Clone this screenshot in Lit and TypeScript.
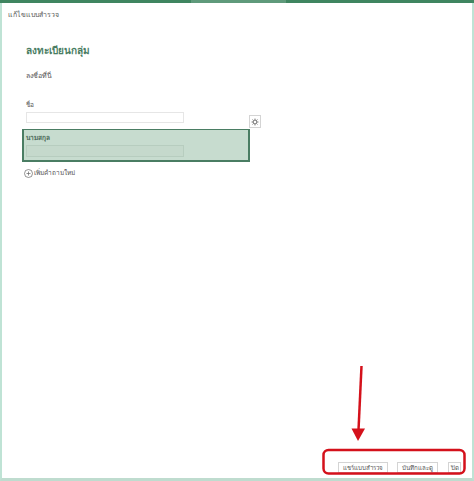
import { LitElement, html, css } from "lit";
import { customElement } from "lit/decorators.js";

@customElement("app-root")
export class AppRoot extends LitElement {
  static styles = css`
    :host {
      display: block;
      width: 474px;
      height: 481px;
      position: relative;
      overflow: hidden;
      font-family: "Noto Sans", "Liberation Sans", sans-serif;
      color: #444;
      background: #fff;
    }
    .frame {
      box-sizing: border-box;
      height: 481px;
      display: flex;
      flex-direction: column;
      border-left: 2px solid #bfe3d5;
      border-right: 2px solid #bfe3d5;
      border-bottom: 3px solid #bfdccf;
      background: #fff;
    }
    .band {
      height: 3px;
      margin: 0 -2px;
      background: #3f8560;
      display: flex;
      justify-content: center;
    }
    .band div {
      width: 95px;
      margin-left: 2px;
      background: #5f9a7b;
    }
    .title {
      font-size: 7px;
      line-height: 10px;
      padding: 7px 0 0 6px;
      color: #555;
    }
    .main {
      flex: 1;
      padding: 23px 0 0 24px;
      display: flex;
      flex-direction: column;
    }
    h1 {
      margin: 0;
      font-size: 10px;
      line-height: 14px;
      font-weight: 700;
      color: #4a7d63;
    }
    .sub {
      font-size: 7px;
      line-height: 10px;
      margin-top: 14px;
      color: #555;
    }
    .label {
      font-size: 6.5px;
      line-height: 9px;
      color: #555;
    }
    .q1 { margin-top: 19px; }
    .row { display: flex; align-items: flex-end; }
    .input {
      box-sizing: border-box;
      width: 158px;
      height: 11px;
      border: 1px solid #e6e6e6;
      background: #fff;
      margin-top: 3px;
    }
    .gear {
      box-sizing: border-box;
      width: 12px;
      height: 13px;
      border: 1px solid #d4d4d4;
      background: #fff;
      margin-left: 65px;
      margin-bottom: -5px;
      display: flex;
      align-items: center;
      justify-content: center;
      z-index: 1;
    }
    .selected {
      box-sizing: border-box;
      width: 228px;
      height: 33px;
      margin: 6px 0 0 -4px;
      padding: 3px 0 0 2px;
      background: #c7dccf;
      border: 1px solid #4a7d63;
      border-width: 1px 2px 2px 2px;
    }
    .selected .label { font-weight: 700; color: #4c6a59; }
    .selected .input {
      height: 12px;
      margin-top: 3px;
      background: #c5d9cc;
      border-color: #b7cdbf;
    }
    .add {
      display: flex;
      align-items: center;
      gap: 1px;
      margin: 6px 0 0 -2px;
      font-size: 6.5px;
      line-height: 10px;
      color: #555;
    }
    .foot {
      display: flex;
      justify-content: flex-end;
      align-items: flex-end;
      gap: 9px;
      padding: 0 11px 5px 0;
    }
    button {
      box-sizing: border-box;
      font: inherit;
      font-size: 6.2px;
      line-height: 9px;
      height: 11px;
      padding: 0;
      border: 1px solid #d4d4d4;
      background: #fff;
      color: #555;
      overflow: hidden;
    }
    .b1 { width: 50px; }
    .b2 { width: 41px; }
    .close { width: 13px; margin-left: 1px; }
    .overlay {
      position: absolute;
      left: 0;
      top: 0;
      pointer-events: none;
    }
  `;

  render() {
    return html`
      <div class="frame">
        <div class="band"><div></div></div>
        <div class="title">แก้ไขแบบสำรวจ</div>
        <div class="main">
          <h1>ลงทะเบียนกลุ่ม</h1>
          <div class="sub">ลงชื่อที่นี่</div>
          <div class="q1 label">ชื่อ</div>
          <div class="row">
            <div class="input"></div>
            <div class="gear">
              <svg width="8" height="8" viewBox="0 0 16 16">
                <circle cx="8" cy="8" r="3.6" fill="none" stroke="#8a8a8a" stroke-width="2.4"></circle>
                <path d="M8 1v3M8 12v3M1 8h3M12 8h3M3 3l2 2M11 11l2 2M13 3l-2 2M5 11l-2 2" stroke="#8a8a8a" stroke-width="2"></path>
              </svg>
            </div>
          </div>
          <div class="selected">
            <div class="label">นามสกุล</div>
            <div class="input"></div>
          </div>
          <div class="add">
            <svg width="9" height="9" viewBox="0 0 9 9">
              <circle cx="4.5" cy="4.5" r="4" fill="none" stroke="#666" stroke-width=".7"></circle>
              <path d="M4.5 2.5v4M2.5 4.5h4" stroke="#666" stroke-width=".7"></path>
            </svg>
            เพิ่มคำถามใหม่
          </div>
        </div>
        <div class="foot">
          <button class="b1">แชร์แบบสำรวจ</button>
          <button class="b2">บันทึกและดู</button>
          <button class="close">ปิด</button>
        </div>
      </div>
      <svg class="overlay" width="474" height="481" viewBox="0 0 474 481">
        <rect x="323.5" y="450" width="141" height="23.5" rx="5" fill="none" stroke="#d4111b" stroke-width="2.5"></rect>
        <path d="M361.5 366L358.5 430" stroke="#d4111b" stroke-width="2.5" fill="none"></path>
        <path d="M351.5 428.500L365 428.500L358 441Z" fill="#d4111b"></path>
      </svg>
    `;
  }
}
